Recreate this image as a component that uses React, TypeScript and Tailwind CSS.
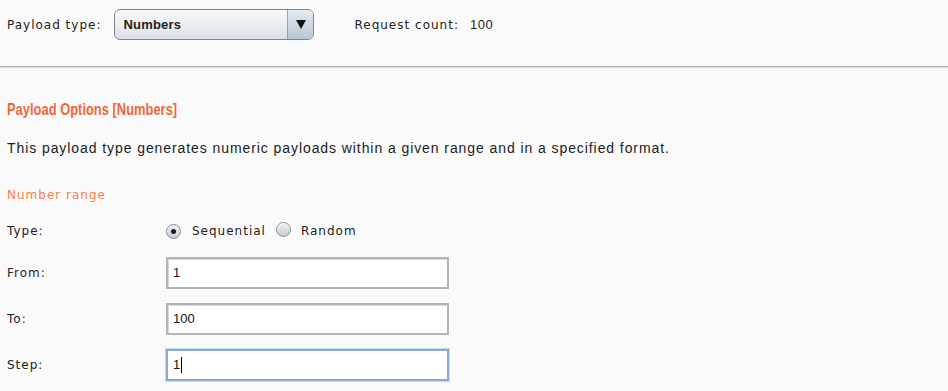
import React from "react";

const lbl = "font-['DejaVu_Sans',sans-serif] text-[12px] tracking-[1px] text-[#222]";

function Radio({ checked }: { checked?: boolean }) {
  return (
    <span className="relative inline-flex h-[15px] w-[15px] items-center justify-center rounded-full border border-[#848e98] bg-gradient-to-b from-[#f0f2f5] to-[#c4ccd4] shadow-[inset_0_1px_1px_rgba(255,255,255,0.9)]">
      {checked && <span className="h-[5px] w-[5px] rounded-full bg-[#1a1a1a]" />}
    </span>
  );
}

function Field({ value, focused }: { value: string; focused?: boolean }) {
  return (
    <div
      className={
        "flex h-[32px] w-[283px] items-center bg-white px-[5px] font-['Liberation_Sans',sans-serif] text-[13px] text-[#111] " +
        (focused
          ? "border-2 border-[#86acd6] shadow-[0_0_0_1px_#c4d8ee]"
          : "border-2 border-[#b4b4b4] shadow-[inset_1px_1px_0_#d8d8d8]")
      }
    >
      <span>{value}</span>
      {focused && <span className="ml-[1px] inline-block h-[16px] w-[1px] bg-black" />}
    </div>
  );
}

function Row({ label, children }: { label: string; children: React.ReactNode }) {
  return (
    <div className="flex items-center">
      <div className={lbl + " w-[159px]"}>{label}</div>
      {children}
    </div>
  );
}

export default function App() {
  return (
    <div className="h-[391px] w-[948px] overflow-hidden bg-[#fafafa]">
      <div className="flex h-[66px] items-start pl-[7px] pt-[9px]">
        <div className="flex h-[31px] items-center">
          <span className={lbl}>Payload type:</span>
          <div className="ml-[13px] flex h-[31px] w-[200px] overflow-hidden rounded-[6px] border border-[#7d868f] bg-gradient-to-b from-[#f7f8fa] via-[#eceff2] to-[#dbe0e5]">
            <div className="flex flex-1 items-center pl-[8px] font-['Liberation_Sans',sans-serif] text-[13px] font-bold tracking-[0.2px] text-[#222]">
              Numbers
            </div>
            <div className="flex w-[26px] items-center justify-center border-l border-[#9aa4ae] bg-gradient-to-b from-[#e3eaf1] to-[#b9c7d4]">
              <svg width="10" height="9" viewBox="0 0 10 9">
                <path d="M0 0 L10 0 L5 9 Z" fill="#111" />
              </svg>
            </div>
          </div>
          <span className={lbl + " ml-[40px]"}>Request count:</span>
          <span className="ml-[11px] font-['Liberation_Sans',sans-serif] text-[13px] tracking-[0.5px] text-[#222]">100</span>
        </div>
      </div>
      <div className="h-[1px] bg-[#a9b1b9]" />
      <div className="h-[1px] bg-[#d6dadf]" />
      <div className="pl-[7px]">
        <div className="pt-[31px] leading-[20px]">
          <span className="inline-block origin-left scale-x-[0.76] whitespace-nowrap font-['Liberation_Sans',sans-serif] text-[17px] font-bold text-[#f2673a]">
            Payload Options [Numbers]
          </span>
        </div>
        <div className="pt-[20px] font-['Liberation_Sans',sans-serif] text-[14px] leading-[17px] tracking-[0.92px] text-[#1c1c1c]">
          This payload type generates numeric payloads within a given range and in a specified format.
        </div>
        <div className="pt-[30px] font-['DejaVu_Sans',sans-serif] text-[12px] leading-[16px] tracking-[1px] text-[#ff7a4a]">
          Number range
        </div>
        <div className="flex flex-col pt-[15px]">
          <div className="flex h-[26px] items-center">
            <div className={lbl + " w-[159px]"}>Type:</div>
            <div className="flex items-center">
              <Radio checked />
              <span className={lbl + " ml-[11px]"}>Sequential</span>
              <span className="ml-[10px]">
                <Radio />
              </span>
              <span className={lbl + " ml-[10px]"}>Random</span>
            </div>
          </div>
          <div className="mt-[13px] flex flex-col gap-[14px]">
            <Row label="From:">
              <Field value="1" />
            </Row>
            <Row label="To:">
              <Field value="100" />
            </Row>
            <Row label="Step:">
              <Field value="1" focused />
            </Row>
          </div>
        </div>
      </div>
    </div>
  );
}
